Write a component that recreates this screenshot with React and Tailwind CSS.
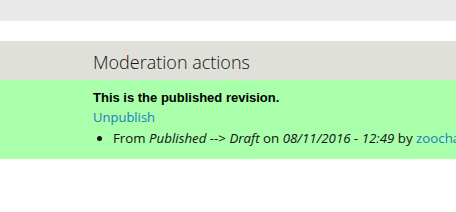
import React from 'react';

const App = () => {
  return (
    <div className="w-[456px] h-[212px] bg-white overflow-hidden" style={{ fontFamily: '"Open Sans", sans-serif' }}>
      <div className="h-[21px] bg-[#e9e9e9]" />
      <div className="h-[20px]" />
      <div className="h-[39px] bg-[#e0e0da] pl-[93px] flex items-center">
        <h2 className="text-[18px] font-light text-[#111] leading-none pt-[2px]">Moderation actions</h2>
      </div>
      <div className="h-[79px] bg-[#aaffaa] pl-[93px] pt-[10px]">
        <p className="text-[13px] font-bold text-black leading-[16px]" style={{ fontFamily: '"Liberation Sans", Arial, sans-serif' }}>
          This is the published revision.
        </p>
        <a href="#" className="block text-[13px] text-[#1c7ec0] leading-[18px] mt-[2px]">Unpublish</a>
        <ul className="list-disc pl-[20px] mt-[2px] text-[13.3px] text-[#111] leading-[20px] whitespace-nowrap">
          <li>
            From <em>Published</em> --&gt; <em>Draft</em> on <em>08/11/2016 - 12:49</em> by{' '}
            <a href="#" className="text-[#1c7ec0]">zoochat</a>
          </li>
        </ul>
      </div>
    </div>
  );
};

export default App;
